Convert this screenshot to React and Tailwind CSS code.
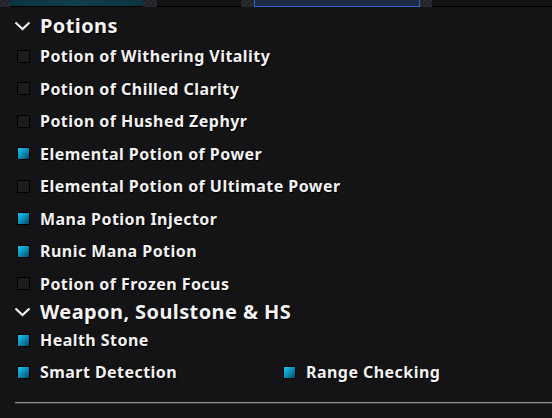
const potions = [
  { label: "Potion of Withering Vitality", checked: false },
  { label: "Potion of Chilled Clarity", checked: false },
  { label: "Potion of Hushed Zephyr", checked: false },
  { label: "Elemental Potion of Power", checked: true },
  { label: "Elemental Potion of Ultimate Power", checked: false },
  { label: "Mana Potion Injector", checked: true },
  { label: "Runic Mana Potion", checked: true },
  { label: "Potion of Frozen Focus", checked: false },
];

const Box = ({ checked }) => (
  <span
    className={
      checked
        ? "w-[13px] h-[13px] shrink-0 border border-black bg-[linear-gradient(135deg,#19c8f2_0%,#0a8fb8_50%,#03475e_100%)]"
        : "w-[13px] h-[13px] shrink-0 border border-black bg-[#1c1c1c]"
    }
  />
);

const Check = ({ label, checked, className = "" }) => (
  <label className={`flex items-center gap-[10px] ${className}`}>
    <Box checked={checked} />
    <span className="text-[16px] font-bold tracking-[0.45px] text-[#f2f2f2] [text-shadow:1px_1px_1px_#000]">
      {label}
    </span>
  </label>
);

const Chevron = () => (
  <svg width="17" height="10" viewBox="0 0 17 10" className="shrink-0">
    <path d="M1.5 1.5 L8.5 8 L15.5 1.5" stroke="#f2f2f2" strokeWidth="2.2" fill="none" />
  </svg>
);

const Header = ({ title, className = "" }) => (
  <div className={`flex items-center gap-[9px] pl-[14px] ${className}`}>
    <Chevron />
    <span className="text-[20px] font-bold tracking-[0.4px] text-[#f4f4f4] [text-shadow:1px_1px_1px_#000]">
      {title}
    </span>
  </div>
);

export default function App() {
  return (
    <div
      className="w-[552px] h-[418px] overflow-hidden bg-[#141416]"
      style={{ fontFamily: '"Noto Sans", "Open Sans", sans-serif' }}
    >
      {/* tab strip */}
      <div className="flex h-[7px] bg-[repeating-linear-gradient(135deg,#2a2a32_0px,#2a2a32_2px,#222229_2px,#222229_4px)]">
        <div className="ml-[10px] w-[133px] border-b border-black bg-[linear-gradient(90deg,#0c3440,#0f3f4b,#0c3440)]" />
        <div className="ml-[14px] w-[84px] border-b border-black bg-[#121212]" />
        <div className="ml-[13px] w-[166px] border-x border-b border-[#2f66d6] bg-[#1d2a42]" />
        <div className="ml-[12px] flex-1 border-b border-black bg-[#121212]" />
      </div>

      <Header title="Potions" className="h-[33px] pt-[5px]" />
      {potions.map((p) => (
        <Check key={p.label} {...p} className="h-[32.5px] pl-[17px]" />
      ))}

      <Header title="Weapon, Soulstone & HS" className="h-[24px] pb-[1px]" />
      <Check label="Health Stone" checked className="h-[32px] pl-[17px]" />
      <div className="flex h-[32px]">
        <Check label="Smart Detection" checked className="w-[283px] pl-[17px]" />
        <Check label="Range Checking" checked />
      </div>

      <div className="ml-[15px] mt-[14px] h-[2px] bg-[#8c8c8c] border-b border-[#3a3a3a]" />
    </div>
  );
}
